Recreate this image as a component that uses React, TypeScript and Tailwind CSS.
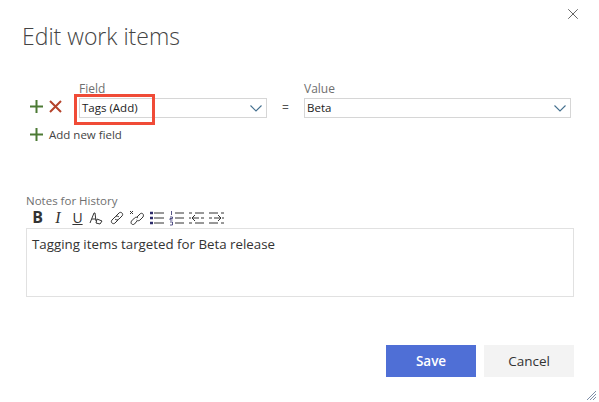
import { X } from "lucide-react";

function Plus({ className = "" }: { className?: string }) {
  return (
    <svg width="13" height="13" viewBox="0 0 13 13" className={className}>
      <path d="M6.5 0v13M0 6.500h13" stroke="#4c7a34" strokeWidth="2" fill="none" />
    </svg>
  );
}

function Select({ value, label, className }: { value: string; label: string; className: string }) {
  return (
    <div className={className}>
      <div className="h-[16px] text-[12px] leading-[16px] text-[#6f6f6f]">{label}</div>
      <div className="mt-[1px] flex h-[20px] items-center justify-between border border-[#d6d6d6] pl-[2px] pr-[2px] text-[11.5px] text-[#222]">
        <span>{value}</span>
        <svg width="12" height="7" viewBox="0 0 12 7" className="mr-[2px]">
          <path d="M.5.500l5.500 5.500 5.500-5.500" fill="none" stroke="#44708f" strokeWidth="1.1" />
        </svg>
      </div>
    </div>
  );
}

const ink = "#333";

function Icon({ d, dark, darkWidth = 1 }: { d: string; dark?: string; darkWidth?: number }) {
  return (
    <svg width="16" height="16" viewBox="0 0 16 16">
      <path d={d} fill="none" stroke={ink} strokeWidth="1" />
      {dark && <path d={dark} fill="none" stroke="#2c2a6b" strokeWidth={darkWidth} />}
    </svg>
  );
}

function Toolbar() {
  return (
    <div className="flex h-[17px] items-center pl-[1px]">
      <span className="flex w-[21px] justify-center text-[16px] font-bold leading-[17px] text-[#333]">B</span>
      <span className="flex w-[20px] justify-center font-['Liberation_Serif',serif] text-[16px] italic leading-[17px] text-[#333]">I</span>
      <span className="flex w-[19px] justify-center text-[14px] leading-[17px] text-[#333] underline">U</span>
      <span className="flex w-[20px] justify-center">
        <Icon d="M1 13L5 3h1l1 8M3 9h4M8 9l5 2-2 3-4-1z" />
      </span>
      <span className="flex w-[20px] justify-center">
        <Icon d="M7 6l3-3c2-2 5 1 3 3l-3 3c-1.500 1.500-3 1-4 0M9 10l-3 3c-2 2-5-1-3-3l3-3c1.500-1.500 3-1 4 0" />
      </span>
      <span className="flex w-[20px] justify-center">
        <Icon d="M8 7l3-3c2-2 4.500.5 3 3l-3 3c-1 1-2.500 1-3.500 0M8 11l-2.500 3c-2 1.500-4.500-.5-3-3l3-3c1-1 2.500-1 3.500 0M1 1l3 3M4 1L1 4" />
      </span>
      <span className="flex w-[20px] justify-center">
        <Icon d="M5 3h10M5 8h10M5 13h10" dark="M1 3h3M1 8h3M1 13h3" darkWidth={2.6} />
      </span>
      <span className="flex w-[20px] justify-center">
        <Icon d="M6 3h9M6 8h9M6 13h9" dark="M2.500 1v4M1 7h2.500v1.500H1V10h2.500M1 12h2.500v3H1" darkWidth={0.8} />
      </span>
      <span className="flex w-[20px] justify-center">
        <Icon d="M0 3h3M0 13h3M6 3h9M6 13h9M0 8h2M12 8h3M6 5L3 8l3 3M3 8h7" />
      </span>
      <span className="flex w-[20px] justify-center">
        <Icon d="M0 3h9M0 13h9M12 3h3M12 13h3M0 8h3M13 8h2M9 5l3 3-3 3M5 8h7" />
      </span>
    </div>
  );
}

export default function App() {
  return (
    <div className="relative h-[402px] w-[599px] overflow-hidden bg-white font-['Open_Sans',sans-serif] text-[#222]">
      <X size={18} strokeWidth={1} className="absolute right-[17px] top-[5px] text-[#333]" />

      <h1 className="pl-[22px] pt-[20px] text-[23px] font-light leading-[32px] text-[#444]">Edit work items</h1>

      <div className="mt-[29px] flex items-end pl-[30px]">
        <div className="mb-[5px] flex w-[49px] items-center gap-[6px]">
          <Plus />
          <svg width="13" height="13" viewBox="0 0 13 13">
            <path d="M1 1l11 11M12 1L1 12" stroke="#b5432b" strokeWidth="2" />
          </svg>
        </div>
        <Select label="Field" value="Tags (Add)" className="w-[188px]" />
        <div className="w-[37px] pb-[1px] pl-[15px] text-[12px] text-[#555]">=</div>
        <Select label="Value" value="Beta" className="w-[267px]" />
      </div>

      <div className="mt-[8px] flex items-center pl-[30px] text-[11.5px] text-[#444]">
        <Plus className="mr-[6px]" />
        <span>Add new field</span>
      </div>

      <div className="ml-[26px] mt-[50px] w-[548px]">
        <div className="h-[16px] text-[11.5px] leading-[16px] text-[#6f6f6f]">Notes for History</div>
        <Toolbar />
        <div className="mt-[2px] h-[69px] border border-[#e1e1e1] px-[5px] py-[5px] text-[13.3px] leading-[20px] text-[#333]">
          Tagging items targeted for Beta release
        </div>
      </div>

      <div className="mr-[25px] mt-[48px] flex justify-end gap-[8px] text-[13.5px]">
        <button className="h-[32px] w-[90px] bg-[#4f6fd6] font-semibold text-white">Save</button>
        <button className="h-[32px] w-[90px] bg-[#f3f3f3] text-[#333]">Cancel</button>
      </div>

      {/* red callout over the field select */}
      <div className="absolute left-[74px] top-[94px] h-[31px] w-[81px] border-[3px] border-[#f04b37]" />

      <svg width="11" height="11" viewBox="0 0 11 11" className="absolute bottom-[1px] right-[2px]">
        <path d="M1 10L10 1M4 10l6-6M7 10l3-3" stroke="#7f8ea8" strokeWidth="1" />
      </svg>
    </div>
  );
}
